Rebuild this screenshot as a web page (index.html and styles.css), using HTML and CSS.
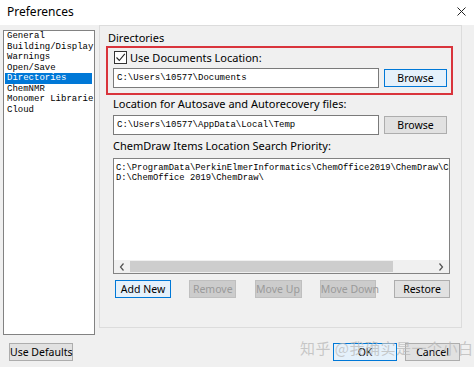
FILE: index.html
```html
<!doctype html>
<html lang="en">
  <head>
    <meta charset="UTF-8" />
    <title>Preferences</title>
    <link rel="stylesheet" href="styles.css">
  </head>
  <body>
    <div class="dialog">
      <div class="titlebar">
        <span class="title">Preferences</span>
        <svg class="close" width="9" height="9" viewBox="0 0 9 9">
          <path d="M0.5 0.5 L8.5 8.5 M8.5 0.5 L0.5 8.5" stroke="#222" stroke-width="1" fill="none" />
        </svg>
      </div>

      <div class="main">
        <ul class="category-list">
          <li>General</li>
          <li>Building/Display</li>
          <li>Warnings</li>
          <li>Open/Save</li>
          <li class="selected">Directories</li>
          <li>ChemNMR</li>
          <li>Monomer Libraries</li>
          <li>Cloud</li>
        </ul>

        <div class="panel">
          <div class="group-title">Directories</div>

          <div class="highlight-box">
            <div class="check-row">
              <span class="checkbox">
                <svg width="11" height="11" viewBox="0 0 11 11">
                  <path d="M1.5 5.5 L4.3 8.5 L9.8 1.8" stroke="#222" stroke-width="1.1" fill="none" />
                </svg>
              </span>
              Use Documents Location:
            </div>
            <div class="path-row">
              <div class="path-input">C:\Users\10577\Documents</div>
              <button class="btn btn-focus">Browse</button>
            </div>
          </div>

          <div class="field-label">Location for Autosave and Autorecovery files:</div>
          <div class="path-row">
            <div class="path-input">C:\Users\10577\AppData\Local\Temp</div>
            <button class="btn">Browse</button>
          </div>

          <div class="field-label">ChemDraw Items Location Search Priority:</div>
          <div class="search-list">
            <div class="search-items">
              <div>C:\ProgramData\PerkinElmerInformatics\ChemOffice2019\ChemDraw\ChemDraw Items\</div>
              <div>D:\ChemOffice 2019\ChemDraw\</div>
            </div>
            <div class="hscroll">
              <span class="arrow">
                <svg width="6" height="8" viewBox="0 0 6 8"><path d="M4.5 0.5 L1.5 4 L4.5 7.5" stroke="#505050" stroke-width="1.2" fill="none" /></svg>
              </span>
              <div class="track"><div class="thumb"></div></div>
              <span class="arrow">
                <svg width="6" height="8" viewBox="0 0 6 8"><path d="M1.5 0.5 L4.5 4 L1.5 7.5" stroke="#505050" stroke-width="1.2" fill="none" /></svg>
              </span>
            </div>
          </div>

          <div class="button-row">
            <button class="btn btn-focus btn-wide">Add New</button>
            <button class="btn" disabled>Remove</button>
            <button class="btn" disabled>Move Up</button>
            <button class="btn btn-wide" disabled>Move Down</button>
            <button class="btn btn-wide">Restore</button>
          </div>
        </div>
      </div>

      <div class="footer">
        <button class="btn btn-footer">Use Defaults</button>
        <button class="btn btn-footer btn-focus btn-ok">OK</button>
        <button class="btn btn-cancel">Cancel</button>
      </div>

      <div class="watermark">知乎 @我确实是一个小白</div>
    </div>
  </body>
</html>
```

FILE: styles.css
```css
body {
  margin: 0;
  background: #f0f0f0;
  font-family: "Noto Sans", Arial, sans-serif;
  font-size: 11px;
  color: #000;
}
.dialog {
  position: relative;
  width: 474px;
  height: 367px;
  overflow: hidden;
}
.titlebar {
  height: 25px;
  background: #fff;
  display: flex;
  align-items: center;
  justify-content: space-between;
  padding: 0 8px 2px 7px;
  box-sizing: border-box;
}
.title {
  font-size: 12px;
}
.main {
  display: flex;
  align-items: flex-start;
  height: 310px;
}
.category-list {
  list-style: none;
  margin: 5px 0 0 3px;
  padding: 0 2px 0 1px;
  width: 92px;
  height: 305px;
  box-sizing: border-box;
  background: #fff;
  border: 1px solid #828282;
  font-family: "Liberation Mono", monospace;
  font-size: 9px;
  line-height: 10.5px;
  overflow: hidden;
  white-space: nowrap;
}
.category-list li {
  padding-left: 2px;
}
.category-list .selected {
  background: #0078d7;
  color: #fff;
}
.panel {
  margin-left: 4px;
  width: 363px;
  height: 303px;
  box-sizing: border-box;
  border: 1px solid #dcdcdc;
  padding: 0 0 0 13px;
}
.group-title {
  margin: 5px 0 0 -5px;
  line-height: 14px;
}
.highlight-box {
  margin: 1px 0 0 -7px;
  width: 347px;
  height: 49px;
  box-sizing: border-box;
  border: 2px solid #d9343c;
  padding: 2px 0 0 5px;
}
.check-row {
  display: flex;
  align-items: center;
  gap: 3px;
  height: 14px;
  margin-left: 1px;
}
.checkbox {
  width: 11px;
  height: 11px;
  border: 1px solid #333;
  background: #fff;
  display: flex;
}
.path-row {
  display: flex;
  align-items: center;
  gap: 5px;
  margin-top: 4px;
}
.path-input {
  width: 266px;
  height: 20px;
  box-sizing: border-box;
  background: #fff;
  border: 1px solid #7a7a7a;
  padding: 0 3px;
  font-family: "Liberation Mono", monospace;
  font-size: 9px;
  line-height: 18px;
  white-space: nowrap;
  overflow: hidden;
}
.btn {
  font-family: "Noto Sans", Arial, sans-serif;
  font-size: 10.5px;
  color: #000;
  background: #e1e1e1;
  border: 1px solid #adadad;
  width: 63px;
  height: 18px;
  padding: 0;
  line-height: 15px;
  white-space: nowrap;
}
.btn-focus {
  border-color: #0078d7;
  background: #e5f1fb;
}
.btn:disabled {
  background: #cccccc;
  border-color: #bfbfbf;
  color: #9a9a9a;
}
.field-label {
  margin-top: 2px;
  line-height: 14px;
}
.path-row + .field-label {
  margin-top: 4px;
}
.search-list {
  margin-top: 5px;
  width: 337px;
  height: 116px;
  box-sizing: border-box;
  border: 1px solid #828282;
  background: #fff;
  display: flex;
  flex-direction: column;
}
.search-items {
  flex: 1;
  overflow: hidden;
  white-space: nowrap;
  padding: 4px 2px 0;
  font-family: "Liberation Mono", monospace;
  font-size: 8.8px;
  line-height: 10px;
}
.hscroll {
  height: 13px;
  display: flex;
  align-items: stretch;
  background: #f0f0f0;
}
.arrow {
  width: 16px;
  display: flex;
  align-items: center;
  justify-content: center;
}
.track {
  flex: 1;
  display: flex;
  padding: 1px 0;
}
.thumb {
  width: 263px;
  background: #cdcdcd;
}
.button-row {
  display: flex;
  justify-content: space-between;
  margin: 6px 0 0 2px;
  width: 335px;
}
.button-row .btn {
  width: 47px;
}
.button-row .btn-wide {
  width: 56px;
}
.footer {
  display: flex;
  align-items: flex-start;
  height: 32px;
  padding: 8px 14px 0 9px;
  box-sizing: border-box;
}
.btn-footer {
  width: 64px;
}
.btn-ok {
  margin-left: auto;
}
.btn-cancel {
  width: 55px;
  margin-left: 8px;
}
.watermark {
  position: absolute;
  left: 300px;
  top: 337px;
  font-family: "Noto Sans CJK SC", sans-serif;
  font-size: 15px;
  color: rgba(185, 185, 185, 0.75);
  letter-spacing: 0.5px;
  pointer-events: none;
}
```
